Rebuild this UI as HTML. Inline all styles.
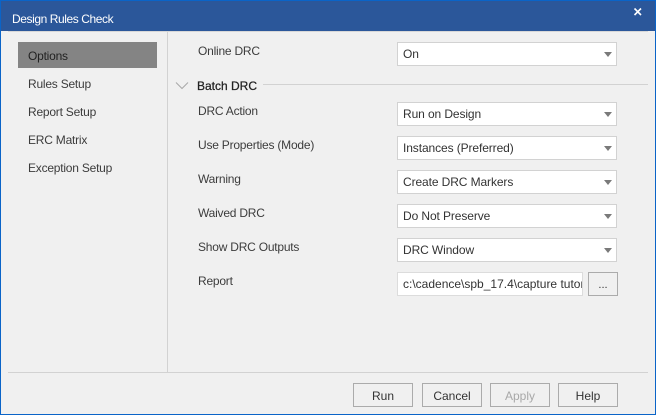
<!DOCTYPE html>
<html>
<head>
<meta charset="utf-8">
<style>
html,body{margin:0;padding:0;width:656px;height:415px;overflow:hidden;background:#f0f0f0;}
body{position:relative;font-family:"Liberation Sans",sans-serif;font-size:12px;color:#333;}
.a{position:absolute;white-space:nowrap;}
.frame{position:absolute;left:0;top:0;width:654px;height:413px;border:1px solid #0a64c8;}
.title{position:absolute;left:1px;top:1px;width:654px;height:30px;background:#2b579a;}
.tt{position:absolute;left:11px;top:11px;color:#fff;font-size:12px;line-height:15px;letter-spacing:-0.42px;white-space:nowrap;}
.lab{position:absolute;line-height:16px;color:#3c3c3c;font-size:12px;letter-spacing:-0.22px;white-space:nowrap;}
.side{left:28px;color:#3c3c3c;}
.f{left:198px;}
.combo{position:absolute;left:397px;width:218px;height:22px;background:#fff;border:1px solid #d2d2d2;line-height:22px;color:#333;font-size:12px;}
.combo span{position:absolute;left:5px;top:0;white-space:nowrap;letter-spacing:-0.1px;}
.arr{position:absolute;left:206px;top:9px;width:0;height:0;border-left:4px solid transparent;border-right:4px solid transparent;border-top:5px solid #7a7a7a;}
.btn{position:absolute;top:383px;width:58px;height:22px;border:1px solid #ababab;background:#f0f0f0;text-align:center;line-height:24px;color:#333;font-size:12px;}
.hl{position:absolute;height:1px;background:#d2d2d2;}
.vl{position:absolute;width:1px;background:#d2d2d2;}
</style>
</head>
<body>
<div class="frame"></div>
<div class="title"><div class="tt">Design Rules Check</div></div>
<svg class="a" style="left:633px;top:7px" width="10" height="10" viewBox="0 0 10 10"><path d="M1.5 1.5L8 8M8 1.5L1.5 8" stroke="#fff" stroke-width="1.6" fill="none"/></svg>

<div class="hl" style="left:8px;top:31px;width:640px;background:#d8d8d8"></div>
<div class="a" style="left:18px;top:42px;width:139px;height:26px;background:#848484"></div>
<div class="lab side" style="top:48px;color:#222">Options</div>
<div class="lab side" style="top:76px">Rules Setup</div>
<div class="lab side" style="top:104px">Report Setup</div>
<div class="lab side" style="top:132px">ERC Matrix</div>
<div class="lab side" style="top:160px">Exception Setup</div>
<div class="vl" style="left:167px;top:32px;height:340px"></div>
<div class="hl" style="left:8px;top:372px;width:640px"></div>

<div class="lab f" style="top:43px">Online DRC</div>
<div class="combo" style="top:42px"><span>On</span><i class="arr"></i></div>

<svg class="a" style="left:175px;top:81px" width="14" height="10" viewBox="0 0 14 10"><path d="M1 1.5L7 7.5L13 1.5" stroke="#a8a8a8" stroke-width="1" fill="none"/></svg>
<div class="lab" style="left:197px;top:78px;letter-spacing:0;color:#222;-webkit-text-stroke:0.25px #222">Batch DRC</div>
<div class="hl" style="left:263px;top:84px;width:385px"></div>

<div class="lab f" style="top:103px">DRC Action</div>
<div class="combo" style="top:102px"><span>Run on Design</span><i class="arr"></i></div>
<div class="lab f" style="top:137px">Use Properties (Mode)</div>
<div class="combo" style="top:136px"><span>Instances (Preferred)</span><i class="arr"></i></div>
<div class="lab f" style="top:171px">Warning</div>
<div class="combo" style="top:170px"><span>Create DRC Markers</span><i class="arr"></i></div>
<div class="lab f" style="top:205px">Waived DRC</div>
<div class="combo" style="top:204px"><span>Do Not Preserve</span><i class="arr"></i></div>
<div class="lab f" style="top:239px">Show DRC Outputs</div>
<div class="combo" style="top:238px"><span>DRC Window</span><i class="arr"></i></div>
<div class="lab f" style="top:273px">Report</div>
<div class="combo" style="top:272px;width:184px;overflow:hidden;border-color:#dcdcdc"><span style="letter-spacing:0">c:\cadence\spb_17.4\capture tutorial</span></div>
<div class="btn" style="left:588px;top:272px;width:28px;line-height:24px;font-size:11px">...</div>

<div class="btn" style="left:353px">Run</div>
<div class="btn" style="left:422px">Cancel</div>
<div class="btn" style="left:490px;color:#a8a8a8">Apply</div>
<div class="btn" style="left:558px">Help</div>
</body>
</html>
